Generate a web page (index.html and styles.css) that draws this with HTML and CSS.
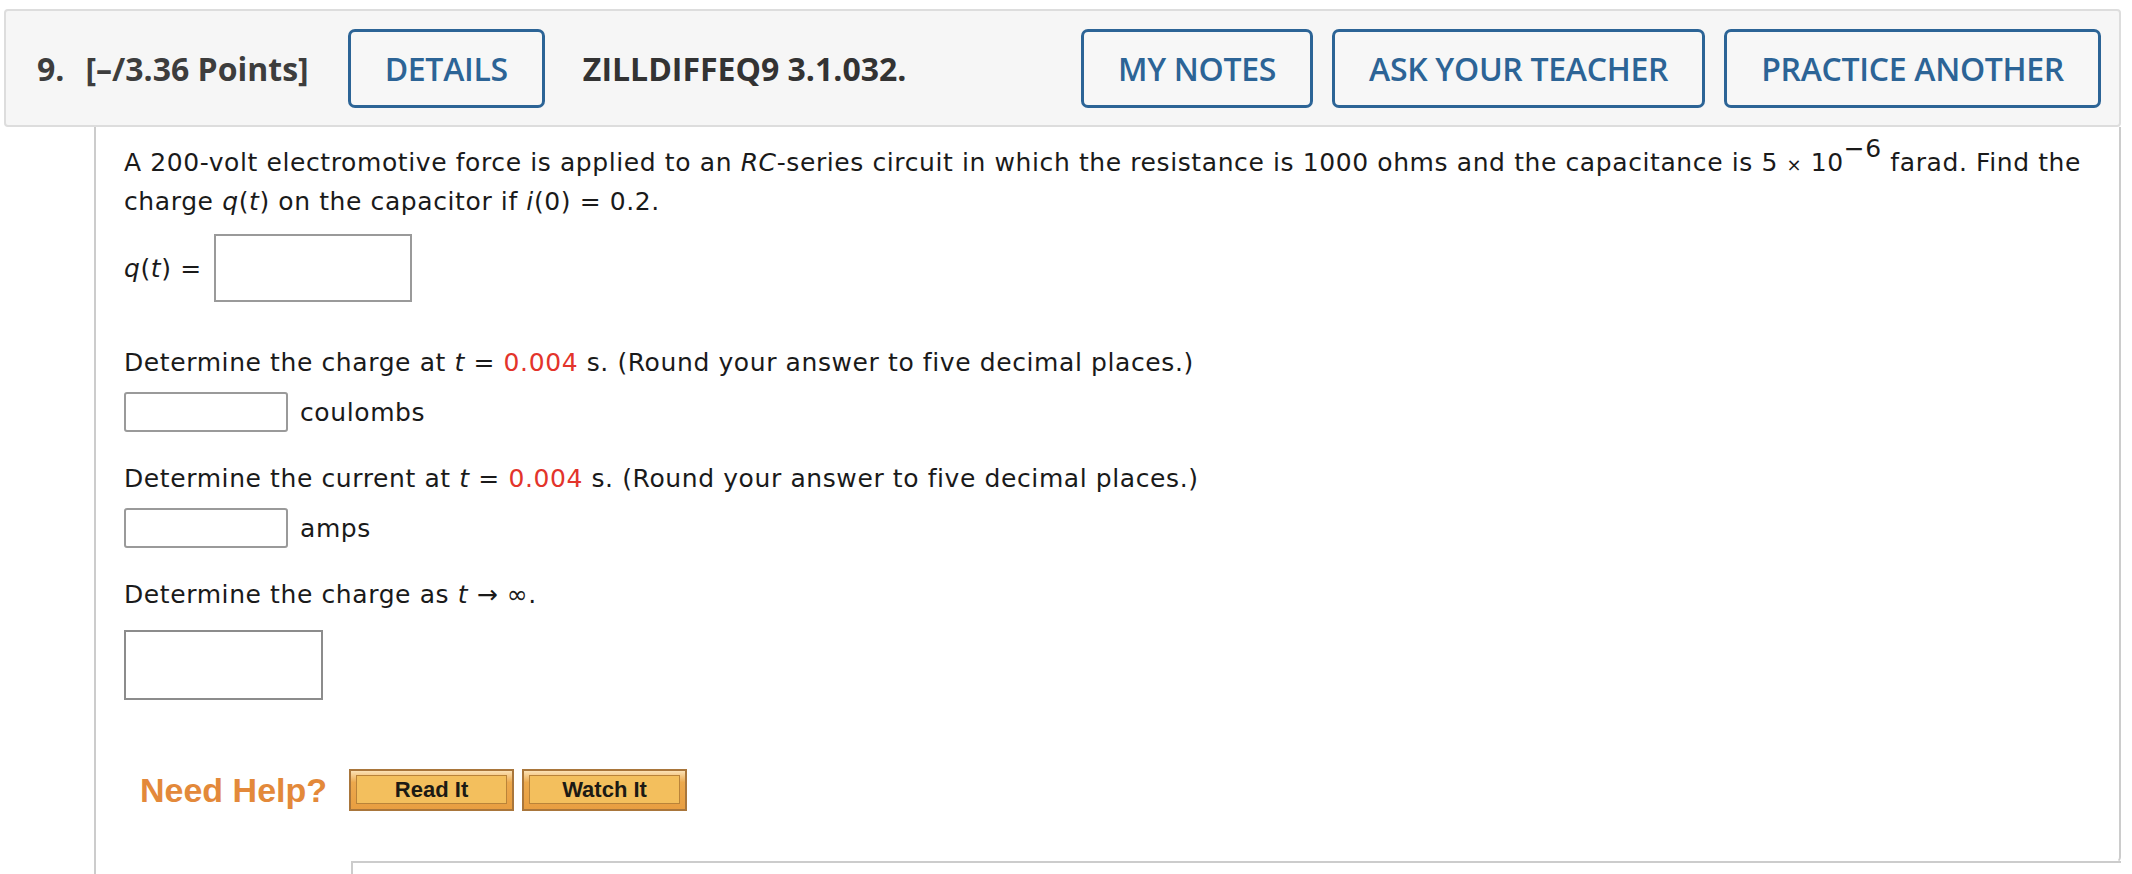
FILE: index.html
```html
<!DOCTYPE html>
<html>
<head>
<meta charset="utf-8">
<link rel="stylesheet" href="styles.css">
</head>
<body>
<div class="question">
  <div class="qhead">
    <span class="qnum">9.</span>
    <span class="qpoints">[–/3.36 Points]</span>
    <button class="hbtn details">DETAILS</button>
    <span class="qcode">ZILLDIFFEQ9 3.1.032.</span>
    <div class="spacer"></div>
    <button class="hbtn">MY NOTES</button>
    <button class="hbtn">ASK YOUR TEACHER</button>
    <button class="hbtn">PRACTICE ANOTHER</button>
  </div>
  <div class="qbody">
    <div class="panel">
      <p class="intro">A 200-volt electromotive force is applied to an <i>RC</i>-series circuit in which the resistance is 1000 ohms and the capacitance is 5 <span class="times">×</span> 10<sup>−6</sup> farad. Find the charge <i>q</i>(<i>t</i>) on the capacitor if <i>i</i>(0) = 0.2.</p>
      <div class="qt-row">
        <span class="qt-label"><i>q</i>(<i>t</i>) =</span>
        <span class="box big"></span>
      </div>
      <p class="ask first">Determine the charge at <i>t</i> = <span class="red">0.004</span> s. (Round your answer to five decimal places.)</p>
      <div class="ans-row"><span class="box small"></span><span class="unit">coulombs</span></div>
      <p class="ask">Determine the current at <i>t</i> = <span class="red">0.004</span> s. (Round your answer to five decimal places.)</p>
      <div class="ans-row"><span class="box small"></span><span class="unit">amps</span></div>
      <p class="ask">Determine the charge as <i>t</i> → ∞.</p>
      <div class="ans-row tall"><span class="box big2"></span></div>
      <div class="help">
        <span class="need">Need Help?</span>
        <span class="help-btn"><span>Read It</span></span>
        <span class="help-btn"><span>Watch It</span></span>
      </div>
    </div>
    <div class="below"></div>
  </div>
</div>
</body>
</html>
```

FILE: styles.css
```css
html, body {
  margin: 0;
  padding: 0;
  background: #ffffff;
}

body {
  overflow: hidden;
}

.question {
  margin: 9px 11px 0 4px;
}

.qhead {
  display: flex;
  align-items: center;
  height: 114px;
  border: 2px solid #dddddd;
  border-radius: 4px;
  background: #f6f6f6;
  padding: 0 18px 0 31px;
  font-family: "Open Sans", "Liberation Sans", sans-serif;
  color: #3d3d3d;
}

.qnum, .qpoints, .qcode {
  font-size: 32px;
  font-weight: 700;
  white-space: nowrap;
}

.qpoints {
  margin-left: 21px;
}

.qcode {
  margin-left: 38px;
  color: #333333;
}

.spacer {
  flex: 1;
}

.hbtn {
  height: 79px;
  border: 3px solid #2c6496;
  border-radius: 7px;
  background: #f7f7f7;
  color: #2c6496;
  font-family: "Open Sans", "Liberation Sans", sans-serif;
  font-size: 32px;
  font-weight: 600;
  padding: 0 34px;
  margin-left: 19px;
  white-space: nowrap;
  letter-spacing: -0.3px;
}

.hbtn.details {
  margin-left: 39px;
  padding: 0 34px;
}

.qbody {
  margin-left: 90px;
  border-left: 2px solid #cccccc;
  height: 760px;
  font-family: "DejaVu Sans", Verdana, sans-serif;
  font-size: 25px;
  letter-spacing: 0.6px;
  color: #1a1a1a;
}

.panel {
  border-right: 2px solid #cccccc;
  border-bottom: 2px solid transparent;
  border-bottom-right-radius: 6px;
  padding: 17px 28px 50px 28px;
}

.intro {
  margin: 0;
  line-height: 37px;
}

sup {
  font-size: 25px;
  line-height: 0;
  vertical-align: 14px;
}

.times {
  font-size: 18px;
}

.qt-row {
  display: flex;
  align-items: center;
  margin-top: 14px;
}

.qt-label {
  width: 90px;
  white-space: nowrap;
}

.box {
  display: block;
  background: #ffffff;
  box-sizing: border-box;
}

.box.big {
  width: 198px;
  height: 68px;
  border: 2px solid #9a9a9a;
}

.box.small {
  width: 164px;
  height: 40px;
  border: 2px solid #9a9a9a;
  border-radius: 3px;
}

.box.big2 {
  width: 199px;
  height: 70px;
  border: 2px solid #8c8c8c;
}

.ask {
  margin: 28px 0 0 0;
  line-height: 37px;
}

.ask.first {
  margin-top: 42px;
}

.ans-row {
  display: flex;
  align-items: center;
  margin-top: 11px;
}

.ans-row.tall {
  margin-top: 17px;
}

.unit {
  margin-left: 12px;
}

.red {
  color: #e3342b;
}

.help {
  display: flex;
  align-items: center;
  margin-top: 69px;
  gap: 8px;
}

.need {
  font-family: "Liberation Sans", Arial, sans-serif;
  font-weight: 700;
  font-size: 34px;
  letter-spacing: 0;
  color: #e3893a;
  margin-left: 16px;
  margin-right: 14px;
}

.help-btn {
  display: flex;
  box-sizing: border-box;
  width: 165px;
  height: 42px;
  padding: 4px 5px 5px 5px;
  border: 2px solid #a9763b;
  background: linear-gradient(#fbe1b4 0%, #eca94d 30%, #e89e41 100%);
}

.help-btn span {
  flex: 1;
  display: flex;
  align-items: center;
  justify-content: center;
  border: 1px solid #b98339;
  background: #f3bf5d;
  font-family: "Liberation Sans", Arial, sans-serif;
  font-weight: 700;
  font-size: 22px;
  letter-spacing: 0;
  color: #1c1a14;
}

.below {
  margin-left: 255px;
  margin-top: -2px;
  height: 40px;
  border-top: 2px solid #cccccc;
  border-left: 2px solid #cccccc;
}
```
